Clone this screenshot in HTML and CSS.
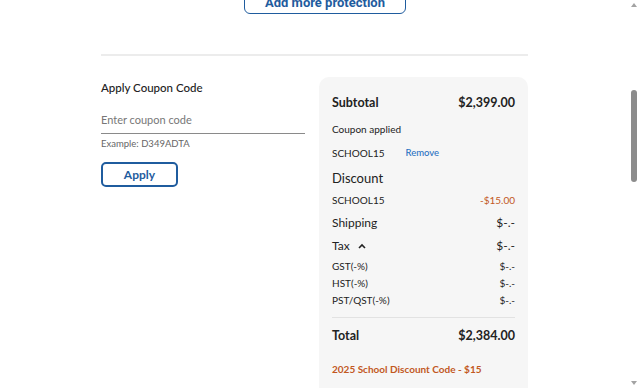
FILE: index.html
```html
<!DOCTYPE html>
<html lang="en">
  <head>
    <meta charset="UTF-8" />
    <meta name="viewport" content="width=device-width, initial-scale=1.0" />
    <title>Cart Summary</title>
    <link rel="stylesheet" href="styles.css">
  </head>
  <body>
    <div class="top_space"></div>
    <div class="container">
      <div class="protection">
        <button class="protect_btn" type="button">Add more protection</button>
      </div>
      <hr class="divider" />

      <div class="checkout">
        <div class="coupon">
          <h3 class="coupon_title">Apply Coupon Code</h3>
          <input type="text" class="coupon_input" placeholder="Enter coupon code" />
          <p class="coupon_hint">Example: D349ADTA</p>
          <button class="apply_btn" type="button">Apply</button>
        </div>

        <div class="summary">
          <div class="row row_big">
            <span>Subtotal</span>
            <span>$2,399.00</span>
          </div>
          <div class="row row_small applied">Coupon applied</div>
          <div class="row row_small code_row">
            <span class="code">SCHOOL15</span>
            <a href="#" class="remove">Remove</a>
          </div>
          <div class="row row_head">Discount</div>
          <div class="row row_small discount">
            <span>SCHOOL15</span>
            <span class="minus">-$15.00</span>
          </div>
          <div class="row row_mid shipping">
            <span>Shipping</span>
            <span>$-.-</span>
          </div>
          <div class="row row_mid tax">
            <span class="tax_label">Tax
              <svg width="8" height="6" viewBox="0 0 8 6"><path d="M1 5 L4 2 L7 5" fill="none" stroke="#222" stroke-width="1.6"/></svg>
            </span>
            <span>$-.-</span>
          </div>
          <div class="row row_small tax_line first">
            <span>GST(-%)</span>
            <span>$-.-</span>
          </div>
          <div class="row row_small tax_line">
            <span>HST(-%)</span>
            <span>$-.-</span>
          </div>
          <div class="row row_small tax_line">
            <span>PST/QST(-%)</span>
            <span>$-.-</span>
          </div>
          <div class="summary_line"></div>
          <div class="row row_big total">
            <span>Total</span>
            <span>$2,384.00</span>
          </div>
          <p class="promo">2025 School Discount Code - $15</p>
        </div>
      </div>
    </div>

    <div class="scrollbar">
      <span class="arrow_up"></span>
      <span class="thumb"></span>
      <span class="arrow_down"></span>
    </div>
    <script src="script.js"></script>
  </body>
</html>
```

FILE: styles.css
```css
* {
  margin: 0;
  padding: 0;
  box-sizing: border-box;
}

body {
  font-family: Lato, "Open Sans", sans-serif;
  color: #222;
  background-color: #fff;
  min-height: 1552px;
  padding-right: 10px;
}

.top_space {
  height: 327px;
}

.container {
  max-width: 427px;
  margin: 0 auto;
}

.protection {
  padding-left: 143px;
}

.protect_btn {
  width: 162px;
  height: 24px;
  border: 1.5px solid #1f5c9e;
  border-radius: 6px;
  background: #fff;
  color: #1f5c9e;
  font-family: Roboto, sans-serif;
  font-weight: 700;
  font-size: 13px;
}

.divider {
  border: none;
  border-top: 2px solid #ececec;
  margin-top: 40px;
}

.checkout {
  display: grid;
  grid-template-columns: 204px 209px;
  column-gap: 14px;
  margin-top: 21px;
  align-items: start;
}

.coupon {
  padding-top: 3px;
}

.coupon_title {
  font-size: 11.5px;
  font-weight: 500;
  line-height: 16px;
}

.coupon_input {
  display: block;
  width: 100%;
  height: 26px;
  margin-top: 12px;
  padding-bottom: 2px;
  border: none;
  border-bottom: 1px solid #8a8a8a;
  font-family: inherit;
  font-size: 11px;
  outline: none;
  background: transparent;
}

.coupon_input::placeholder {
  color: #777;
}

.coupon_hint {
  margin-top: 4px;
  font-size: 9.5px;
  line-height: 12px;
  color: #666;
}

.apply_btn {
  width: 77px;
  height: 25px;
  margin-top: 12px;
  border: 2px solid #1f5c9e;
  border-radius: 5px;
  background: #fff;
  color: #1f5c9e;
  font-family: inherit;
  font-weight: 700;
  font-size: 12px;
}

.summary {
  background-color: #f6f6f6;
  border-radius: 10px;
  padding: 17px 13px 30px;
}

.row {
  display: flex;
  justify-content: space-between;
  align-items: center;
}

.row_big {
  font-size: 12.5px;
  font-weight: 700;
  line-height: 18px;
}

.row_small {
  font-size: 10px;
  line-height: 14px;
}

.row_mid {
  font-size: 12px;
  line-height: 16px;
}

.row_head {
  font-size: 13px;
  line-height: 18px;
  margin-top: 9px;
}

.applied {
  margin-top: 10px;
}

.code_row {
  justify-content: flex-start;
  margin-top: 10px;
}

.remove {
  margin-left: 21px;
  color: #2a72c2;
  font-size: 9.5px;
  text-decoration: none;
  font-weight: 500;
}

.discount {
  margin-top: 6px;
}

.minus {
  color: #c2581f;
}

.shipping {
  margin-top: 8px;
}

.tax {
  margin-top: 7px;
}

.tax_label svg {
  margin-left: 5px;
  vertical-align: 1px;
}

.tax_line {
  margin-top: 3px;
}

.tax_line.first {
  margin-top: 5px;
}

.summary_line {
  height: 1px;
  background-color: #e2e2e2;
  margin-top: 10px;
}

.total {
  margin-top: 9px;
}

.promo {
  margin-top: 17px;
  font-size: 10px;
  line-height: 14px;
  font-weight: 700;
  color: #c2581f;
}

/* browser scrollbar, drawn over the page edge */
.scrollbar {
  position: fixed;
  top: 0;
  right: 0;
  width: 10px;
  height: 100%;
  background-color: #fff;
}

.thumb {
  position: absolute;
  top: 90px;
  left: 2px;
  width: 6px;
  height: 92px;
  border-radius: 3px;
  background-color: #8c8c8c;
}

.arrow_up,
.arrow_down {
  position: absolute;
  left: 2px;
  width: 0;
  height: 0;
  border-left: 3px solid transparent;
  border-right: 3px solid transparent;
}

.arrow_up {
  top: 3px;
  border-bottom: 4px solid #a3a3a3;
}

.arrow_down {
  bottom: 3px;
  border-top: 4px solid #a3a3a3;
}
```

FILE: script.js
```js
window.addEventListener("load", function () {
  window.scrollTo(0, 337);
});
```
